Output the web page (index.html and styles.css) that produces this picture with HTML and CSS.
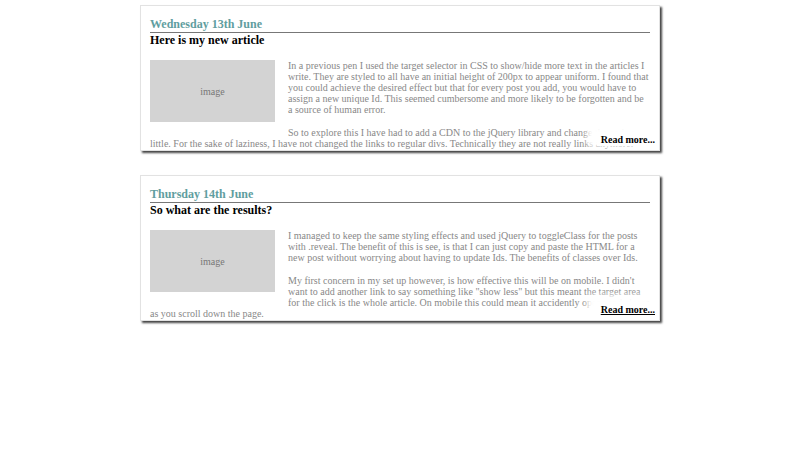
FILE: index.html
```html
<!DOCTYPE html>
<html>
<head>
<meta charset="utf-8">
<link rel="stylesheet" href="styles.css">
</head>
<body>
<main class="blog">
  <article class="post">
    <h2 class="date">Wednesday 13th June</h2>
    <h3 class="title">Here is my new article</h3>
    <div class="body">
      <div class="image">image</div>
      <p>In a previous pen I used the target selector in CSS to show/hide more text in the articles I write. They are styled to all have an initial height of 200px to appear uniform. I found that you could achieve the desired effect but that for every post you add, you would have to assign a new unique Id. This seemed cumbersome and more likely to be forgotten and be a source of human error.</p>
      <p>So to explore this I have had to add a CDN to the jQuery library and change the code a little. For the sake of laziness, I have not changed the links to regular divs. Technically they are not really links anymore.</p>
    </div>
    <a class="more">Read more...</a>
  </article>
  <article class="post">
    <h2 class="date">Thursday 14th June</h2>
    <h3 class="title">So what are the results?</h3>
    <div class="body">
      <div class="image">image</div>
      <p>I managed to keep the same styling effects and used jQuery to toggleClass for the posts with .reveal. The benefit of this is see, is that I can just copy and paste the HTML for a new post without worrying about having to update Ids. The benefits of classes over Ids.</p>
      <p>My first concern in my set up however, is how effective this will be on mobile. I didn't want to add another link to say something like "show less" but this meant the target area for the click is the whole article. On mobile this could mean it accidently opens and closes as you scroll down the page.</p>
    </div>
    <a class="more underline">Read more...</a>
  </article>
</main>
</body>
</html>
```
FILE: styles.css
```css
html, body {
  margin: 0;
  padding: 0;
  background: #fff;
  font-family: "Liberation Serif", "Times New Roman", serif;
}
.blog {
  padding-top: 5px;
}
.post {
  position: relative;
  box-sizing: border-box;
  width: 520px;
  height: 146px;
  margin: 0 auto 24px;
  padding: 11px 9px 0;
  border: 1px solid #e2e2e2;
  box-shadow: 2px 2px 2px #444;
  overflow: hidden;
  background: #fff;
}
.date {
  margin: 0;
  font-size: 12px;
  font-weight: bold;
  color: #5f9ea0;
  line-height: 14px;
  padding-bottom: 1px;
  border-bottom: 1px solid #777;
}
.title {
  margin: 0;
  font-size: 12px;
  font-weight: bold;
  color: #000;
  line-height: 15px;
}
.body {
  margin-top: 12px;
  font-size: 10px;
  line-height: 11px;
  color: #888;
}
.image {
  float: left;
  width: 125px;
  height: 62px;
  margin: 0 13px 10px 0;
  background: #d3d3d3;
  color: #777;
  display: flex;
  align-items: center;
  justify-content: center;
}
.body p {
  margin: 0 0 12px;
}
.more {
  position: absolute;
  right: 4px;
  bottom: 4px;
  padding: 2px 0 0 4px;
  font-size: 10px;
  font-weight: bold;
  color: #000;
  background: #fff;
  box-shadow: -6px -3px 6px 4px #fff;
  line-height: 12px;
}
.underline {
  text-decoration: underline;
}
```
